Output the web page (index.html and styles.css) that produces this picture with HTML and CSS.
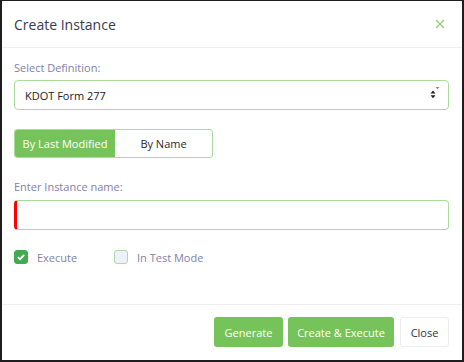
FILE: index.html
```html
<!DOCTYPE html>
<html>
<head>
<meta charset="utf-8">
<link rel="stylesheet" href="styles.css">
</head>
<body>
<div class="frame">
  <div class="header">
    <h1 class="title">Create Instance</h1>
    <svg class="close-x" width="10" height="10" viewBox="0 0 10 10"><path d="M1 1 L9 9 M9 1 L1 9" stroke="#8fd07a" stroke-width="1.3" fill="none"/></svg>
  </div>
  <div class="body">
    <div class="label">Select Definition:</div>
    <div class="select">
      <span>KDOT Form 277</span>
      <svg class="arrows" width="10" height="16" viewBox="0 0 10 16"><path d="M5.5 1 L9.5 1 L7.5 3.2 Z" fill="#8a8a8a"/><path d="M0.5 7.6 L5.5 7.6 L3 4.6 Z M0.5 9.2 L5.5 9.2 L3 12.2 Z" fill="#1e1e1e"/></svg>
    </div>
    <div class="toggle">
      <div class="tg active">By Last Modified</div>
      <div class="tg">By Name</div>
    </div>
    <div class="label label2">Enter Instance name:</div>
    <div class="input"></div>
    <div class="checks">
      <div class="chk">
        <span class="box on"><svg width="14" height="14" viewBox="0 0 14 14"><path d="M3.8 7.2 L6 9.2 L10.2 4.8" stroke="#fff" stroke-width="1.8" fill="none"/></svg></span>
        <span class="chk-text">Execute</span>
      </div>
      <div class="chk">
        <span class="box"></span>
        <span class="chk-text">In Test Mode</span>
      </div>
    </div>
  </div>
  <div class="footer">
    <button class="btn green w-gen">Generate</button>
    <button class="btn green w-ce">Create &amp; Execute</button>
    <button class="btn plain">Close</button>
  </div>
</div>
</body>
</html>
```
FILE: styles.css
```css
html, body {
  margin: 0;
  padding: 0;
  background: #fff;
}
body {
  font-family: "Open Sans", "DejaVu Sans", sans-serif;
}
.frame {
  width: 464px;
  height: 362px;
  box-sizing: border-box;
  border-top: 1px solid #1e1e1e;
  border-left: 2px solid #1e1e1e;
  border-right: 2px solid #1e1e1e;
  border-bottom: 2px solid #1e1e1e;
  display: flex;
  flex-direction: column;
  background: #fff;
}
.header {
  height: 46px;
  border-bottom: 1px solid #eeeeee;
  display: flex;
  align-items: center;
  justify-content: space-between;
  padding: 0 17px 0 12px;
}
.title {
  margin: 0;
  font-size: 14px;
  font-weight: 500;
  color: #3a3a56;
}
.close-x {
  display: block;
}
.body {
  padding: 12px 13px 0 12px;
}
.label {
  font-size: 11px;
  line-height: 16px;
  color: #7f7fab;
  margin-bottom: 4px;
}
.label2 {
  margin-top: 21px;
  margin-bottom: 5px;
}
.select {
  height: 30px;
  box-sizing: border-box;
  border: 1px solid #a9dc9c;
  border-radius: 4px;
  display: flex;
  align-items: center;
  justify-content: space-between;
  padding: 0 8px 0 10px;
  font-size: 11px;
  color: #222;
}
.arrows {
  display: block;
  margin-top: -2px;
}
.toggle {
  margin-top: 19px;
  width: 199px;
  height: 29px;
  box-sizing: border-box;
  border: 1px solid #a9dc9c;
  border-radius: 3px;
  display: flex;
  overflow: hidden;
}
.tg {
  display: flex;
  align-items: center;
  justify-content: center;
  font-size: 11px;
  color: #2a2a2a;
  flex: 1;
}
.tg.active {
  flex: 0 0 100px;
  background: #77c35b;
  color: #fff;
}
.input {
  height: 30px;
  box-sizing: border-box;
  border: 1px solid #a9dc9c;
  border-left: 3px solid #ff0000;
  border-radius: 4px;
}
.checks {
  margin-top: 19px;
  display: flex;
  height: 16px;
  align-items: center;
}
.chk {
  display: flex;
  align-items: center;
  width: 100px;
}
.box {
  width: 14px;
  height: 14px;
  box-sizing: border-box;
  border-radius: 3px;
  border: 1px solid #a9dca0;
  background: #eef0fa;
  display: block;
}
.box.on {
  background: #40ac4f;
  border-color: #40ac4f;
}
.box svg {
  display: block;
  margin: -1px;
}
.chk-text {
  margin-left: 9px;
  font-size: 11px;
  color: #7f7fab;
}
.footer {
  margin-top: auto;
  border-top: 1px solid #eeeeee;
  padding: 12px 13px 13px 12px;
  display: flex;
  justify-content: flex-end;
  gap: 5px;
}
.btn {
  height: 30px;
  box-sizing: border-box;
  border-radius: 3px;
  font-family: inherit;
  font-size: 11px;
  padding: 0;
  border: 1px solid transparent;
  cursor: pointer;
}
.btn.green {
  background: #77c35b;
  color: #fff;
}
.w-gen { width: 69px; }
.w-ce { width: 106px; }
.btn.plain {
  background: #fff;
  border-color: #ededed;
  color: #333;
  margin-left: 1px;
  width: 49px;
}
```
